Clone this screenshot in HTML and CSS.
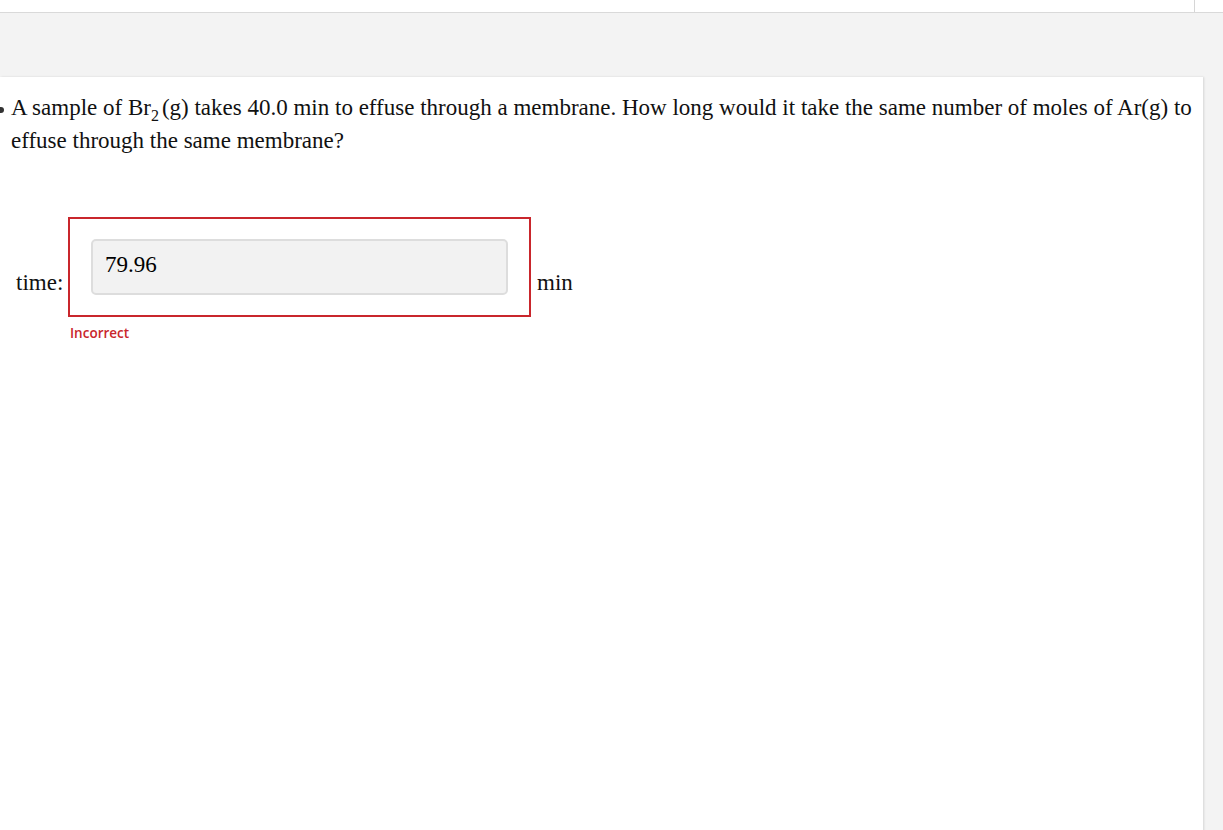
FILE: index.html
```html
<!DOCTYPE html>
<html lang="en">
<head>
    <meta charset="UTF-8">
    <title>Question</title>
    <link rel="stylesheet" href="styles.css">
</head>
<body>
    <div class="topbar">
        <div class="topbar-edge"></div>
    </div>

    <div class="page">
        <div class="card">
            <div class="question">
                <span class="qmark"></span>
                <p class="prompt">A sample of Br<sub>2</sub>(g) takes 40.0 min to effuse through a membrane. How long would it take the same number of moles of Ar(g) to effuse through the same membrane?</p>
            </div>

            <div class="answer-row">
                <span class="label">time:</span>
                <div class="answer-col">
                    <div class="answer-box">
                        <input type="text" class="answer-input" value="79.96">
                    </div>
                    <div class="feedback">Incorrect</div>
                </div>
                <span class="unit">min</span>
            </div>
        </div>
    </div>
</body>
</html>
```

FILE: styles.css
```css
body {
    margin: 0;
    font-family: "Liberation Serif", "Times New Roman", serif;
    color: #111;
    background: #f3f3f3;
}
.topbar {
    height: 12px;
    background: #fff;
    border-bottom: 1px solid #d9d9d9;
    display: flex;
    justify-content: flex-end;
}
.topbar-edge {
    width: 28px;
    border-left: 1px solid #d6d6d6;
}
.page {
    padding-top: 64px;
    padding-right: 20px;
}
.card {
    background: #fff;
    min-height: 760px;
    box-shadow: 1px 0 2px rgba(0, 0, 0, 0.12);
    overflow: hidden;
}
.question {
    display: flex;
    align-items: flex-start;
    padding-top: 14px;
}
.qmark {
    flex-shrink: 0;
    width: 4px;
    height: 6px;
    margin-top: 16px;
    margin-right: 7px;
    background: #333;
    border-radius: 0 3px 3px 0;
}
.prompt {
    margin: 0;
    font-size: 23px;
    line-height: 33px;
    padding-right: 10px;
}
.prompt sub {
    font-size: 16px;
    line-height: 0;
    margin-right: 3px;
}
.answer-row {
    display: flex;
    align-items: flex-start;
    margin-top: 60px;
    padding-left: 16px;
    font-size: 23px;
}
.label {
    margin-top: 53px;
    width: 52px;
}
.answer-col {
    display: flex;
    flex-direction: column;
}
.answer-box {
    width: 417px;
    padding: 20px 21px;
    border: 2px solid #c9262c;
}
.answer-input {
    box-sizing: border-box;
    width: 417px;
    height: 56px;
    padding: 0 12px 4px;
    background: #f2f2f2;
    border: 2px solid #dddddd;
    border-radius: 5px;
    font-family: "Liberation Serif", "Times New Roman", serif;
    font-size: 23px;
    color: #000;
}
.feedback {
    margin-top: 7px;
    padding-left: 2px;
    font-family: "Open Sans", sans-serif;
    font-weight: 600;
    font-size: 13.5px;
    color: #c9262c;
}
.unit {
    margin-top: 53px;
    margin-left: 6px;
}
```
